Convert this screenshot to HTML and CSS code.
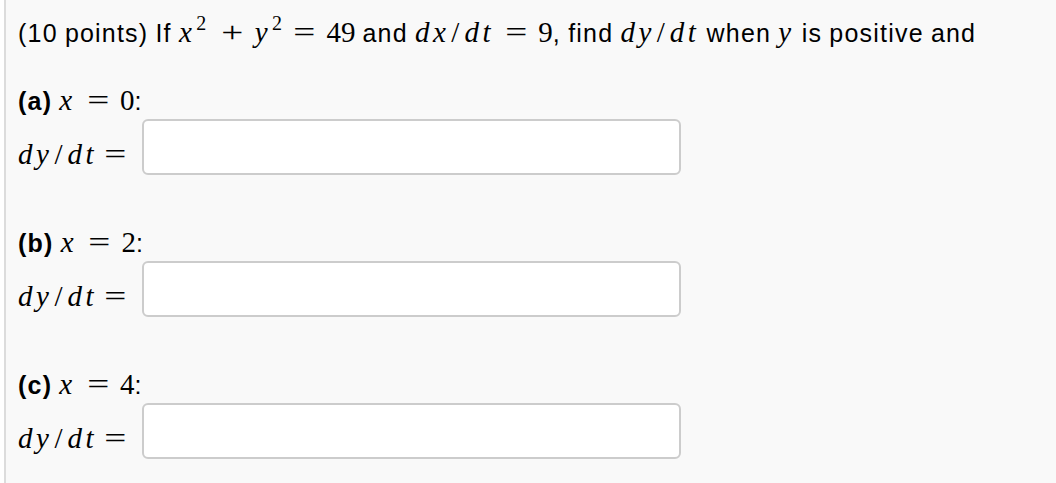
FILE: index.html
```html
<!DOCTYPE html>
<html>
<head>
<meta charset="utf-8">
<link rel="stylesheet" href="styles.css">
</head>
<body>
<div class="panel">
  <p class="intro">(10 points) If <span class="m"><i>x</i><sup>2</sup><span class="op">+</span><i>y</i><sup>2</sup><span class="rel">=</span>49</span> and <span class="m"><i>dx</i><span class="sl">/</span><i>dt</i><span class="rel">=</span>9</span>, find <span class="m"><i>dy</i><span class="sl">/</span><i>dt</i></span> when <span class="m"><i>y</i></span> is positive and</p>

  <div class="part">
    <p class="label"><b>(a)</b> <span class="m"><i>x</i><span class="rel">=</span>0</span>:</p>
    <div class="answer"><span class="m lhs"><i>dy</i><span class="sl">/</span><i>dt</i><span class="rel">=</span></span><input class="box" type="text"></div>
  </div>

  <div class="part">
    <p class="label"><b>(b)</b> <span class="m"><i>x</i><span class="rel">=</span>2</span>:</p>
    <div class="answer"><span class="m lhs"><i>dy</i><span class="sl">/</span><i>dt</i><span class="rel">=</span></span><input class="box" type="text"></div>
  </div>

  <div class="part">
    <p class="label"><b>(c)</b> <span class="m"><i>x</i><span class="rel">=</span>4</span>:</p>
    <div class="answer"><span class="m lhs"><i>dy</i><span class="sl">/</span><i>dt</i><span class="rel">=</span></span><input class="box" type="text"></div>
  </div>
</div>
</body>
</html>
```

FILE: styles.css
```css
html, body {
  margin: 0;
  padding: 0;
  background: #ffffff;
}
.panel {
  margin-left: 4px;
  border-left: 2px solid #dcdcdc;
  background: #f9f9f9;
  height: 483px;
  box-sizing: border-box;
  padding: 15px 0 0 12px;
  font-family: "Liberation Sans", Arial, sans-serif;
  font-size: 25px;
  letter-spacing: 1.2px;
  word-spacing: -1px;
  color: #000;
}
p { margin: 0; }
.intro {
  line-height: 36px;
  white-space: nowrap;
}
.m {
  font-family: "Liberation Serif", "Times New Roman", serif;
  font-size: 29px;
  line-height: 1;
  letter-spacing: 0;
  word-spacing: 0;
}
.m i { font-style: italic; letter-spacing: 3.5px; }
.m sup { font-size: 20px; vertical-align: 12px; line-height: 0; margin-left: 1px; }
.sl { margin: 0 5px 0 2px; }
.rel, .op {
  display: inline-block;
  transform: scaleX(1.35);
  margin: 0 14px;
}
.op { margin: 0 14px 0 18px; }
.part { margin-top: 32px; }
.part + .part { margin-top: 50px; }
.label { line-height: 36px; }
.answer {
  display: flex;
  align-items: center;
}
.lhs {
  width: 124px;
  padding-top: 14px;
  white-space: nowrap;
}
.lhs .rel { margin-left: 10px; }
.box {
  width: 539px;
  height: 56px;
  box-sizing: border-box;
  border: 2px solid #cccccc;
  border-radius: 6px;
  background: #fff;
  margin: 0;
  padding: 0;
}
```
